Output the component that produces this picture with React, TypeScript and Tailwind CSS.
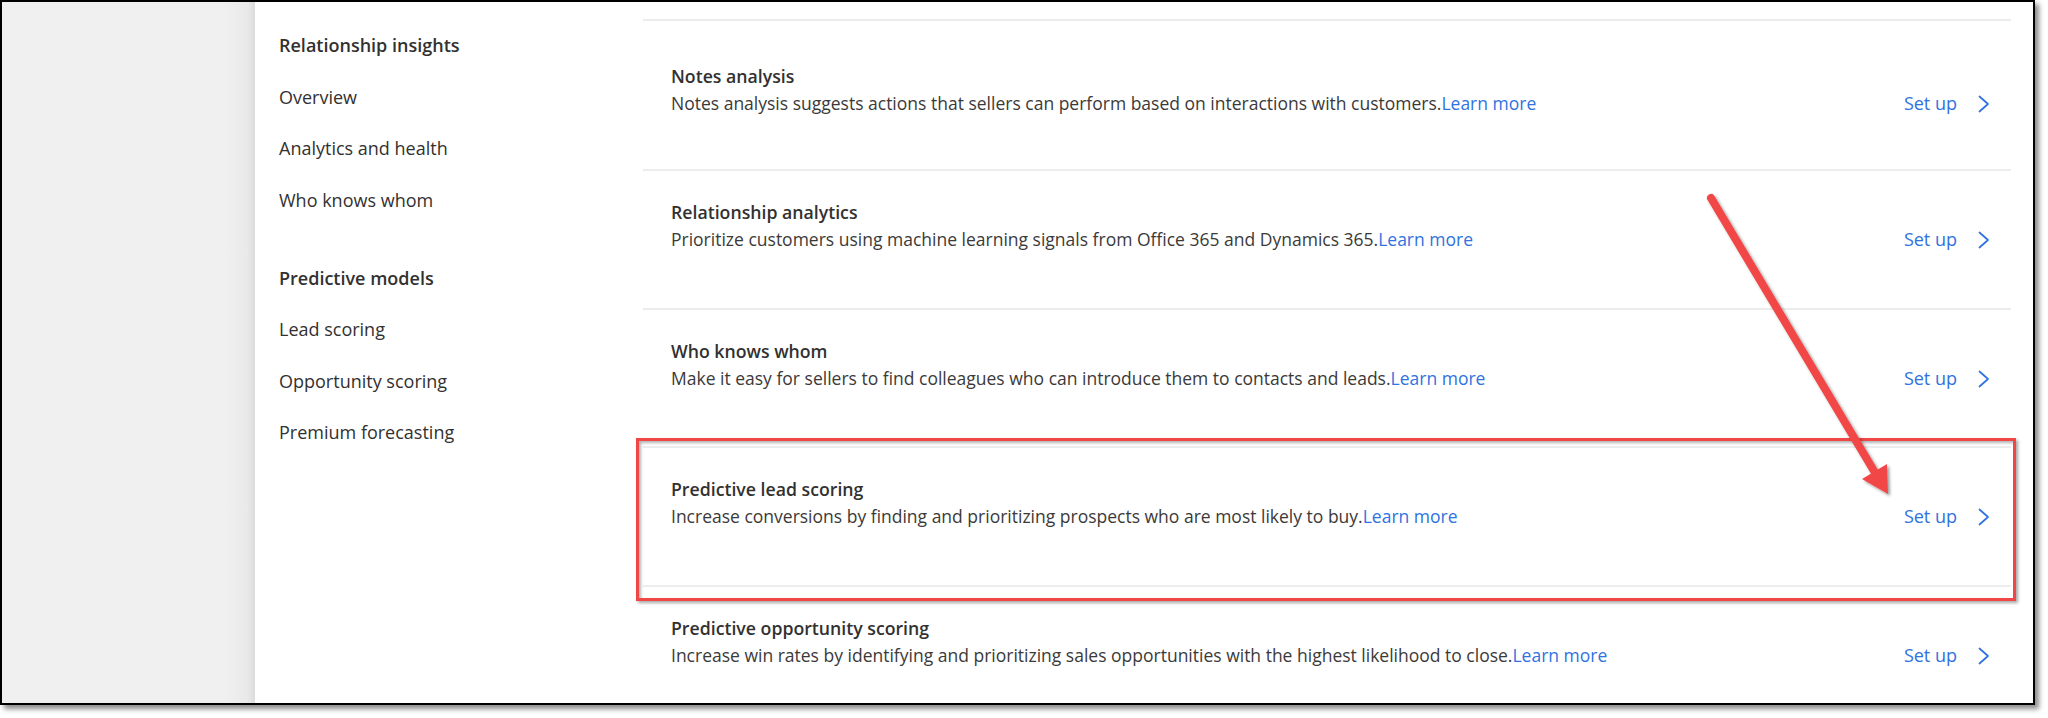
import React from "react";

type Row = { title: string; desc: string; h: string; pt: string };

const rows: Row[] = [
  {
    title: "Notes analysis",
    desc: "Notes analysis suggests actions that sellers can perform based on interactions with customers.",
    h: "h-[150px]",
    pt: "pt-[42px]",
  },
  {
    title: "Relationship analytics",
    desc: "Prioritize customers using machine learning signals from Office 365 and Dynamics 365.",
    h: "h-[139px]",
    pt: "pt-[28px]",
  },
  {
    title: "Who knows whom",
    desc: "Make it easy for sellers to find colleagues who can introduce them to contacts and leads.",
    h: "h-[138px]",
    pt: "pt-[28px]",
  },
  {
    title: "Predictive lead scoring",
    desc: "Increase conversions by finding and prioritizing prospects who are most likely to buy.",
    h: "h-[139px]",
    pt: "pt-[28px]",
  },
  {
    title: "Predictive opportunity scoring",
    desc: "Increase win rates by identifying and prioritizing sales opportunities with the highest likelihood to close.",
    h: "flex-1",
    pt: "pt-[28px]",
  },
];

function Chevron() {
  return (
    <svg width="12" height="18" viewBox="0 0 12 18" fill="none">
      <path d="M1.5 1.5 L10 9 L1.5 16.5" stroke="#2f72e0" strokeWidth="1.7" strokeLinecap="round" strokeLinejoin="round" />
    </svg>
  );
}

export default function App() {
  return (
    <div
      className="w-[2048px] h-[718px] bg-white overflow-hidden"
      style={{ fontFamily: '"Open Sans", "Noto Sans", sans-serif' }}
    >
      <div className="relative w-[2035px] h-[705px] border-2 border-black bg-white flex shadow-[4px_4px_5px_rgba(0,0,0,0.45)]">
        <div className="w-[253px] h-full bg-[linear-gradient(to_right,#f0f0f0_0%,#f0f0f0_88%,#e9e9e9_97%,#dcdcdc_100%)]" />
        <div className="flex flex-1 h-full">
          <nav className="w-[388px] pl-[24px] pt-[30px] flex flex-col gap-[24.5px] text-[18px] leading-[27px] text-[#323130]">
            <div className="font-semibold">Relationship insights</div>
            <div>Overview</div>
            <div>Analytics and health</div>
            <div>Who knows whom</div>
            <div className="font-semibold mt-[26.5px]">Predictive models</div>
            <div>Lead scoring</div>
            <div>Opportunity scoring</div>
            <div>Premium forecasting</div>
          </nav>
          <main className="w-[1368px] pt-[17px] flex flex-col h-full">
            {rows.map((r) => (
              <div
                key={r.title}
                className={`${r.h} ${r.pt} border-t-2 border-[#ececec] pl-[28px] pr-[21px] leading-[27px]`}
              >
                <div className="font-semibold text-[17.7px] text-[#323130]">{r.title}</div>
                <div className="flex items-center justify-between">
                  <div className="text-[17.5px] text-[#3b3a39]">
                    {r.desc}
                    <span className="text-[#2f72e0]">Learn more</span>
                  </div>
                  <div className="flex items-center gap-[21px] text-[18px] text-[#2f72e0]">
                    <span>Set up</span>
                    <Chevron />
                  </div>
                </div>
              </div>
            ))}
          </main>
        </div>

        {/* annotation: red highlight box */}
        <div className="absolute left-[634px] top-[436px] w-[1380px] h-[163px] border-[3px] border-[#f04646] shadow-[2px_2px_3px_rgba(0,0,0,0.35),inset_2px_2px_3px_rgba(0,0,0,0.3)] pointer-events-none" />

        {/* annotation: red arrow */}
        <svg
          className="absolute left-[-2px] top-[-2px] pointer-events-none"
          width="2035"
          height="705"
          viewBox="0 0 2035 705"
        >
          <defs>
            <filter id="arrowShadow" x="-20%" y="-20%" width="140%" height="140%">
              <feDropShadow dx="2" dy="2" stdDeviation="1.5" floodColor="#000" floodOpacity="0.4" />
            </filter>
          </defs>
          <g filter="url(#arrowShadow)">
            <line x1="1711" y1="198" x2="1877" y2="476" stroke="#f24646" strokeWidth="8" strokeLinecap="round" />
            <polygon points="1888,494 1862,479 1887,464" fill="#f24646" />
          </g>
        </svg>
      </div>
    </div>
  );
}
